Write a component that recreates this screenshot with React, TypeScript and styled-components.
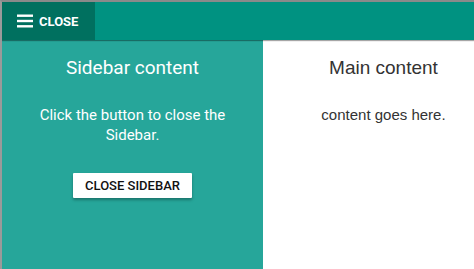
import React from "react";
import styled, { createGlobalStyle } from "styled-components";

const Global = createGlobalStyle`
  html, body { margin: 0; padding: 0; background: #fff; }
  body { width: 474px; height: 269px; overflow: hidden; }
`;

const Frame = styled.div`
  box-sizing: border-box;
  width: 474px;
  height: 269px;
  border-top: 2px solid #8a8a8a;
  border-left: 2px solid #9a9a9a;
  display: flex;
  flex-direction: column;
  overflow: hidden;
`;

const TopBar = styled.header`
  height: 38px;
  background: #009281;
  display: flex;
  align-items: stretch;
  position: relative;
  z-index: 1;
  box-shadow: 0 1px 1px rgba(0,0,0,0.35);
`;

const MenuButton = styled.button`
  border: none;
  background: #00705f;
  color: #fff;
  width: 93px;
  display: flex;
  align-items: center;
  gap: 6px;
  padding: 0 0 0 15px;
  font-family: Roboto, "Liberation Sans", sans-serif;
  font-weight: 700;
  font-size: 13px;
  cursor: pointer;
`;

const Body = styled.div`
  flex: 1;
  display: flex;
`;

const Sidebar = styled.aside`
  width: 261px;
  background: #26a69a;
  color: #fff;
  font-family: Roboto, "Liberation Sans", sans-serif;
  text-align: center;
  display: flex;
  flex-direction: column;
  align-items: center;
`;

const SideTitle = styled.h3`
  margin: 16px 0 0;
  font-size: 19px;
  font-weight: 400;
  line-height: 24px;
`;

const SideText = styled.p`
  margin: 25px 0 0;
  font-size: 15px;
  line-height: 20px;
  padding: 0 30px;
`;

const SideButton = styled.button`
  margin-top: 28px;
  border: none;
  background: #fff;
  color: #111;
  font-family: Roboto, "Liberation Sans", sans-serif;
  font-size: 13px;
  font-weight: 500;
  height: 25px;
  padding: 0 12px;
  border-radius: 1px;
  box-shadow: 0 2px 3px rgba(0,0,0,0.3);
  cursor: pointer;
`;

const Main = styled.main`
  flex: 1;
  background: #fff;
  color: #333;
  font-family: "Liberation Sans", Arial, sans-serif;
  text-align: center;
  padding-left: 30px;
`;

const MainTitle = styled.h3`
  margin: 16px 0 0;
  font-size: 19px;
  font-weight: 400;
  line-height: 24px;
`;

const MainText = styled.p`
  margin: 25px 0 0;
  font-size: 15px;
  line-height: 20px;
`;

const Bars = () => (
  <svg width="16" height="14" viewBox="0 0 16 14">
    <rect x="0" y="0.5" width="16" height="2.4" fill="#fff" />
    <rect x="0" y="5.8" width="16" height="2.4" fill="#fff" />
    <rect x="0" y="11.1" width="16" height="2.4" fill="#fff" />
  </svg>
);

export default function App() {
  return (
    <>
      <Global />
      <Frame>
        <TopBar>
          <MenuButton>
            <Bars />
            CLOSE
          </MenuButton>
        </TopBar>
        <Body>
          <Sidebar>
            <SideTitle>Sidebar content</SideTitle>
            <SideText>Click the button to close the Sidebar.</SideText>
            <SideButton>CLOSE SIDEBAR</SideButton>
          </Sidebar>
          <Main>
            <MainTitle>Main content</MainTitle>
            <MainText>content goes here.</MainText>
          </Main>
        </Body>
      </Frame>
    </>
  );
}
